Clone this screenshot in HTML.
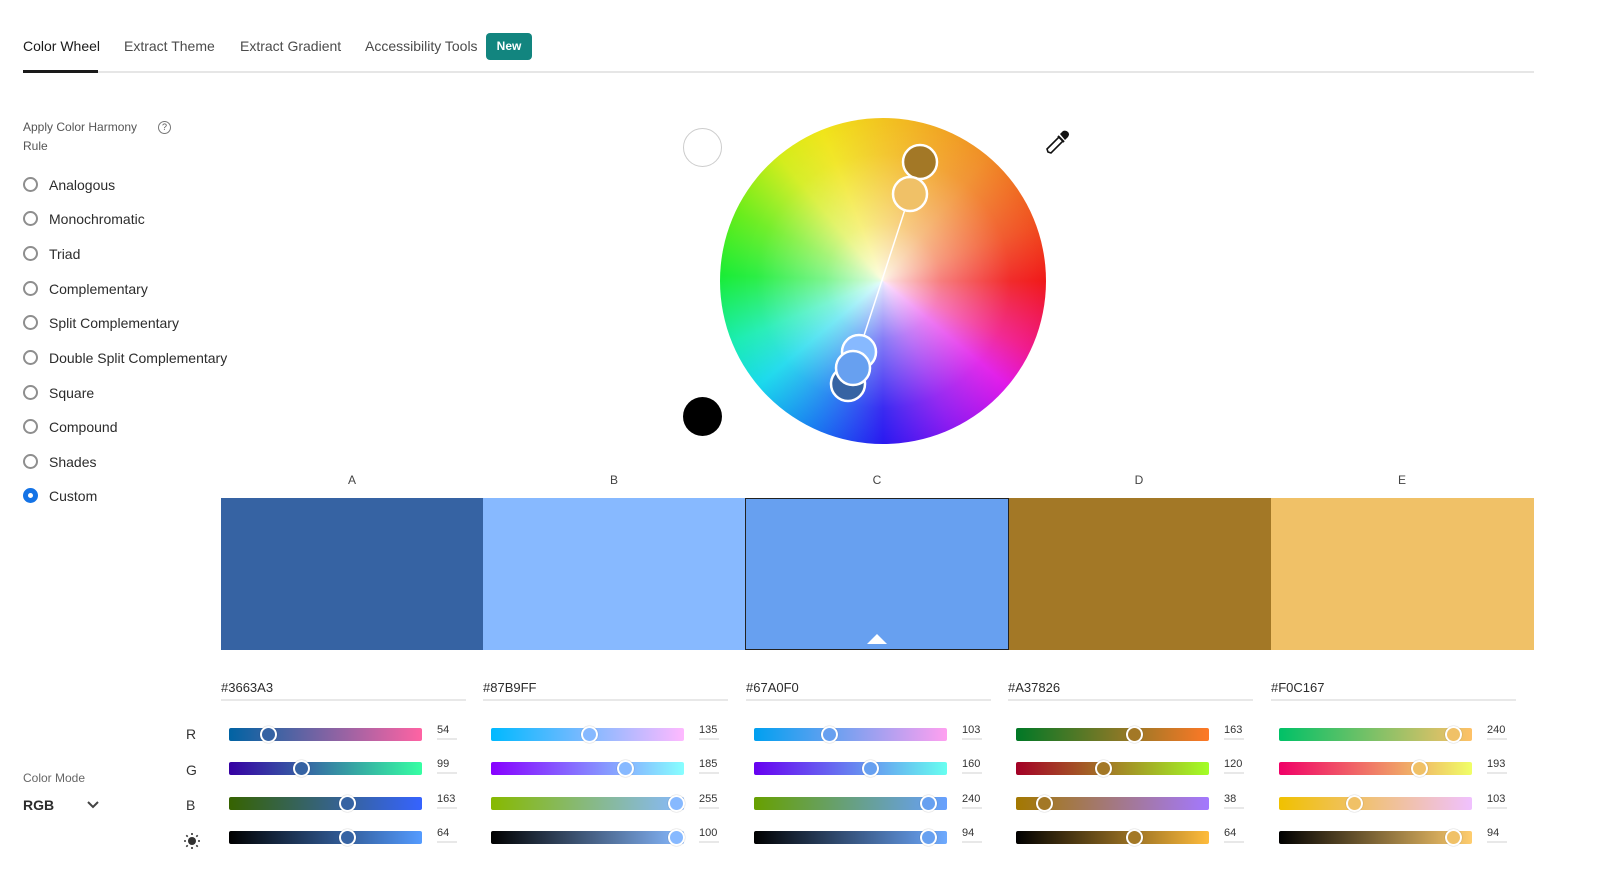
<!DOCTYPE html>
<html><head><meta charset="utf-8"><style>
*{box-sizing:border-box;margin:0;padding:0}
body{width:1600px;height:873px;background:#fff;font-family:"Liberation Sans",sans-serif;color:#2c2c2c;position:relative;overflow:hidden}
.a{position:absolute}
.tab{position:absolute;top:38px;font-size:14px;color:#4b4b4b}
.radio{position:absolute;left:23px;width:15px;height:15px;border:2px solid #8e8e8e;border-radius:50%}
.rl{position:absolute;left:49px;font-size:14px;color:#2c2c2c}
.sw{position:absolute;top:498px;height:152px}
.lab{position:absolute;top:473px;font-size:12px;color:#444;width:20px;text-align:center}
.hex{position:absolute;top:680px;font-size:13px;color:#2c2c2c;width:245px;border-bottom:2px solid #e8e8e8;height:21px}
.tr{position:absolute;width:193px;height:13px;border-radius:2px}
.kn{position:absolute;width:17px;height:17px;border:2px solid #fff;border-radius:50%;top:-2px;box-shadow:0 0 1px rgba(0,0,0,.4)}
.val{position:absolute;font-size:11px;color:#333;width:20px;border-bottom:2px solid #e8e8e8;height:16px}
.rowl{position:absolute;left:186px;font-size:14px;color:#333}
</style></head><body>
<div class="tab" style="left:23px;color:#1a1a1a">Color Wheel</div>
<div class="tab" style="left:124px">Extract Theme</div>
<div class="tab" style="left:240px">Extract Gradient</div>
<div class="tab" style="left:365px">Accessibility Tools</div>
<div class="a" style="left:486px;top:33px;width:46px;height:27px;background:#12857f;border-radius:4px;color:#fff;font-size:12px;font-weight:bold;text-align:center;line-height:27px">New</div>
<div class="a" style="left:23px;top:71px;width:1511px;height:2px;background:#e6e6e6"></div>
<div class="a" style="left:23px;top:70px;width:75px;height:3px;background:#1a1a1a"></div>

<div class="a" style="left:23px;top:118px;font-size:12px;color:#555;line-height:19px">Apply Color Harmony<br>Rule</div>
<div class="a" style="left:158px;top:121px;width:13px;height:13px;border:1px solid #777;border-radius:50%;font-size:9px;text-align:center;line-height:11px;color:#555">?</div>

<div class="radio" style="top:177px"></div><div class="rl" style="top:177px">Analogous</div>
<div class="radio" style="top:211px"></div><div class="rl" style="top:211px">Monochromatic</div>
<div class="radio" style="top:246px"></div><div class="rl" style="top:246px">Triad</div>
<div class="radio" style="top:281px"></div><div class="rl" style="top:281px">Complementary</div>
<div class="radio" style="top:315px"></div><div class="rl" style="top:315px">Split Complementary</div>
<div class="radio" style="top:350px"></div><div class="rl" style="top:350px">Double Split Complementary</div>
<div class="radio" style="top:385px"></div><div class="rl" style="top:385px">Square</div>
<div class="radio" style="top:419px"></div><div class="rl" style="top:419px">Compound</div>
<div class="radio" style="top:454px"></div><div class="rl" style="top:454px">Shades</div>
<div class="radio" style="top:488px;border:5px solid #1473e6"></div><div class="rl" style="top:488px">Custom</div>

<div class="a" style="left:23px;top:771px;font-size:12px;color:#666">Color Mode</div>
<div class="a" style="left:23px;top:797px;font-size:14px;font-weight:bold;color:#2c2c2c">RGB</div>
<svg class="a" style="left:87px;top:800px" width="12" height="10"><path d="M1 2 L6 7 L11 2" fill="none" stroke="#444" stroke-width="2"/></svg>

<!-- wheel -->
<div class="a" style="left:720px;top:118px;width:326px;height:326px;border-radius:50%;background:conic-gradient(from 0deg,#f2c21a 0deg,#f08a22 40deg,#f04a1a 70deg,#f01414 90deg,#f0148a 115deg,#e014e8 130deg,#8a14f0 155deg,#2414f0 180deg,#1478f0 205deg,#14d8ec 230deg,#14ecb0 248deg,#14ec30 272deg,#64ec14 295deg,#d2ec14 320deg,#f0e414 338deg,#f2c21a 360deg)"></div>
<div class="a" style="left:720px;top:118px;width:326px;height:326px;border-radius:50%;background:radial-gradient(circle,rgba(255,255,255,.9) 0%,rgba(255,255,255,.45) 25%,rgba(255,255,255,.1) 55%,rgba(255,255,255,0) 75%)"></div>
<div class="a" style="left:683px;top:128px;width:39px;height:39px;border-radius:50%;border:1px solid #ccc;background:#fff"></div>
<div class="a" style="left:683px;top:397px;width:39px;height:39px;border-radius:50%;background:#000"></div>
<svg class="a" style="left:720px;top:118px" width="326" height="326">
<line x1="190" y1="76" x2="138" y2="236" stroke="#fff" stroke-width="1.5"/>
<circle cx="200" cy="44" r="17" fill="#a37826" stroke="#fff" stroke-width="2.5"/>
<circle cx="190" cy="76" r="17" fill="#f0c167" stroke="#fff" stroke-width="2.5"/>
<circle cx="128" cy="266" r="17" fill="#3663a3" stroke="#fff" stroke-width="2.5"/>
<circle cx="139" cy="234" r="17" fill="#87b9ff" stroke="#fff" stroke-width="2.5"/>
<circle cx="133" cy="250" r="17" fill="#67a0f0" stroke="#fff" stroke-width="2.5"/>
</svg>
<svg class="a" style="left:1044px;top:128px" width="28" height="28"><path d="M4 24 L3 21 L15 9 L19 13 L7 25 Z" fill="#fff" stroke="#111" stroke-width="1.6"/><path d="M16 6 L19 3 Q22 2 24 4 Q26 6 24 9 L21 12 Z" fill="#111"/><path d="M14 8 L20 14" stroke="#111" stroke-width="2"/></svg>

<!-- swatches -->
<div class="lab" style="left:342px">A</div><div class="lab" style="left:604px">B</div><div class="lab" style="left:867px">C</div><div class="lab" style="left:1129px">D</div><div class="lab" style="left:1392px">E</div>
<div class="sw" style="left:221px;width:262px;background:#3663a3"></div>
<div class="sw" style="left:483px;width:262px;background:#87b9ff"></div>
<div class="sw" style="left:745px;width:264px;background:#67a0f0;border:1px solid #222"></div>
<div class="sw" style="left:1009px;width:262px;background:#a37826"></div>
<div class="sw" style="left:1271px;width:263px;background:#f0c167"></div>
<svg class="a" style="left:867px;top:633px" width="20" height="12"><path d="M0 11 L10 1 L20 11Z" fill="#fff"/></svg>

<div class="rowl" style="top:726px">R</div>
<div class="rowl" style="top:762px">G</div>
<div class="rowl" style="top:797px">B</div>
<svg class="a" style="left:183px;top:832px" width="18" height="18"><circle cx="9" cy="9" r="4" fill="#333"/><g stroke="#333" stroke-width="1.6"><path d="M9 1v2M9 15v2M1 9h2M15 9h2M3.3 3.3l1.4 1.4M13.3 13.3l1.4 1.4M3.3 14.7l1.4-1.4M13.3 4.7l1.4-1.4"/></g></svg>

<div id="cols"></div>
<script>
var cols=[
 {x:221,hex:"#3663A3",c:[54,99,163],br:64,full:[84,155,255]},
 {x:483,hex:"#87B9FF",c:[135,185,255],br:100,full:[135,185,255]},
 {x:746,hex:"#67A0F0",c:[103,160,240],br:94,full:[110,170,255]},
 {x:1008,hex:"#A37826",c:[163,120,38],br:64,full:[255,188,60]},
 {x:1271,hex:"#F0C167",c:[240,193,103],br:94,full:[255,205,110]}];
var ys=[728,762,797,831];var h='';
function rgb(a){return 'rgb('+a.join(',')+')'}
cols.forEach(function(o){
 var c=o.c,col=rgb(c);
 h+='<div class="hex" style="left:'+o.x+'px">'+o.hex+'</div>';
 for(var i=0;i<4;i++){
  var s,e,f,v;
  if(i<3){s=c.slice();e=c.slice();s[i]=0;e[i]=255;f=c[i]/255;v=c[i];}
  else{s=[0,0,0];e=o.full;f=o.br/100;v=o.br;}
  var tx=o.x+8;
  h+='<div class="tr" style="left:'+tx+'px;top:'+ys[i]+'px;background:linear-gradient(90deg,'+rgb(s)+','+rgb(e)+')"><div class="kn" style="left:'+(f*185-8)+'px;background:'+col+'"></div></div>';
  h+='<div class="val" style="left:'+(o.x+216)+'px;top:'+(ys[i]-4)+'px">'+v+'</div>';
 }
});
document.getElementById('cols').innerHTML=h;
</script>
</body></html>
